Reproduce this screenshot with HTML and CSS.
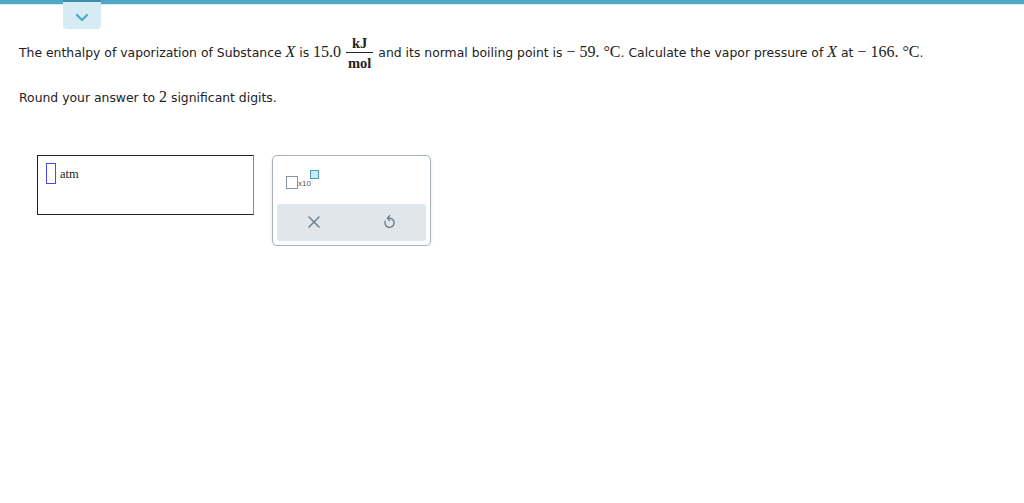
FILE: index.html
```html
<!DOCTYPE html>
<html>
<head>
<meta charset="utf-8">
<link rel="stylesheet" href="styles.css">
</head>
<body>
<div class="topbar"></div>
<div class="tabrow">
  <div class="tab">
    <svg width="14" height="9" viewBox="0 0 14 9"><path d="M2 2 L7 7 L12 2" fill="none" stroke="#4fa9c6" stroke-width="2.2" stroke-linecap="round" stroke-linejoin="round"/></svg>
  </div>
</div>
<div class="content">
  <p class="q">The enthalpy of vaporization of Substance <span class="m i">X</span> is <span class="m">15.0</span> <span class="frac"><span class="num">kJ</span><span class="den">mol</span></span> and its normal boiling point is <span class="m"><span class="minus">&minus;</span>59. °C</span>. Calculate the vapor pressure of <span class="m i">X</span> at <span class="m"><span class="minus">&minus;</span>166. °C</span>.</p>
  <p class="r">Round your answer to <span class="m">2</span> significant digits.</p>
  <div class="answer">
    <div class="inputbox">
      <span class="cursor"></span><span class="unit">atm</span>
    </div>
    <div class="palette">
      <div class="sci">
        <span class="bigsq"></span><span class="x10">x10</span><span class="smsq"></span>
      </div>
      <div class="actions">
        <svg width="14" height="14" viewBox="0 0 14 14"><path d="M2 2 L12 12 M12 2 L2 12" stroke="#6b7f8e" stroke-width="1.5" stroke-linecap="round"/></svg>
        <svg width="14" height="16" viewBox="0 0 14 16"><path d="M6 4.2 L8 4.2 A4.6 4.6 0 1 1 3.2 7.2" fill="none" stroke="#6b7f8e" stroke-width="1.4" stroke-linecap="round"/><path d="M7.6 1.6 L5.4 4.2 L7.6 6.6" fill="none" stroke="#6b7f8e" stroke-width="1.4" stroke-linecap="round" stroke-linejoin="round"/></svg>
      </div>
    </div>
  </div>
</div>
</body>
</html>
```
FILE: styles.css
```css
html, body { margin: 0; padding: 0; background: #fff; }
body { font-family: Verdana, "DejaVu Sans", sans-serif; font-size: 12.4px; color: #222; }
.topbar { height: 4px; background: #4fa9c6; border-bottom: 1px solid #d3ecf4; }
.tabrow { padding-left: 63px; height: 24px; }
.tab { width: 38px; height: 23px; background: #d5ecf4; border-top: 2px solid #3d8eaa; margin-top: -5px; border-radius: 0 0 4px 4px; display: flex; align-items: center; justify-content: center; padding-top: 4px; box-sizing: content-box; }
.tab svg { display: block; }
.content { padding-left: 19px; }
.q { margin: 8px 0 0 0; line-height: 40px; height: 40px; white-space: nowrap; }
.m { font-family: "Liberation Serif", "Times New Roman", serif; font-size: 16px; }
.minus { margin-right: 4px; }
.i { font-style: italic; }
.frac { display: inline-flex; flex-direction: column; align-items: center; vertical-align: middle; font-family: "Liberation Serif", serif; font-size: 14.5px; font-weight: bold; line-height: 16px; margin: 0 2px; position: relative; top: -1px; }
.num { padding: 0 1px 1px; border-bottom: 1px solid #222; width: 100%; text-align: center; }
.den { padding-top: 2px; padding-left: 1px; padding-right: 1px; }
.r { margin: 17px 0 0 0; line-height: 16px; }
.answer { display: flex; align-items: flex-start; margin-top: 49px; margin-left: 18px; gap: 18px; }
.inputbox { border: 1px solid #222; border-right-color: #888; display: flex; align-items: flex-start; padding: 7px 0 0 8px; box-sizing: border-box; height: 60px; width: 217px; }
.cursor { width: 8px; height: 19px; border: 1px solid #4a4ae8; box-sizing: content-box; display: block; }
.unit { font-family: "Liberation Serif", serif; font-size: 12.5px; margin-left: 4px; margin-top: 5px; line-height: 12px; }
.palette { width: 159px; height: 91px; border: 1px solid #a8b2ba; border-radius: 5px; box-sizing: border-box; box-shadow: 0 1px 3px rgba(0,0,0,0.12); padding: 14px 4px 4px 4px; display: flex; flex-direction: column; }
.sci { display: flex; align-items: flex-start; padding-left: 9px; height: 34px; }
.bigsq { width: 10px; height: 11px; border: 1.5px solid #8996a0; margin-top: 6px; display: block; }
.x10 { font-family: "Liberation Sans", Arial, sans-serif; font-size: 8px; color: #555; margin-top: 9px; line-height: 10px; }
.smsq { width: 7px; height: 7px; border: 1.5px solid #4a9fbc; background: #cdeaf3; display: block; margin-left: -1px; }
.actions { background: #e1e6ea; border-radius: 3px; height: 38px; display: flex; align-items: center; justify-content: space-between; padding: 0 30px; }
.actions svg { display: block; }
```
